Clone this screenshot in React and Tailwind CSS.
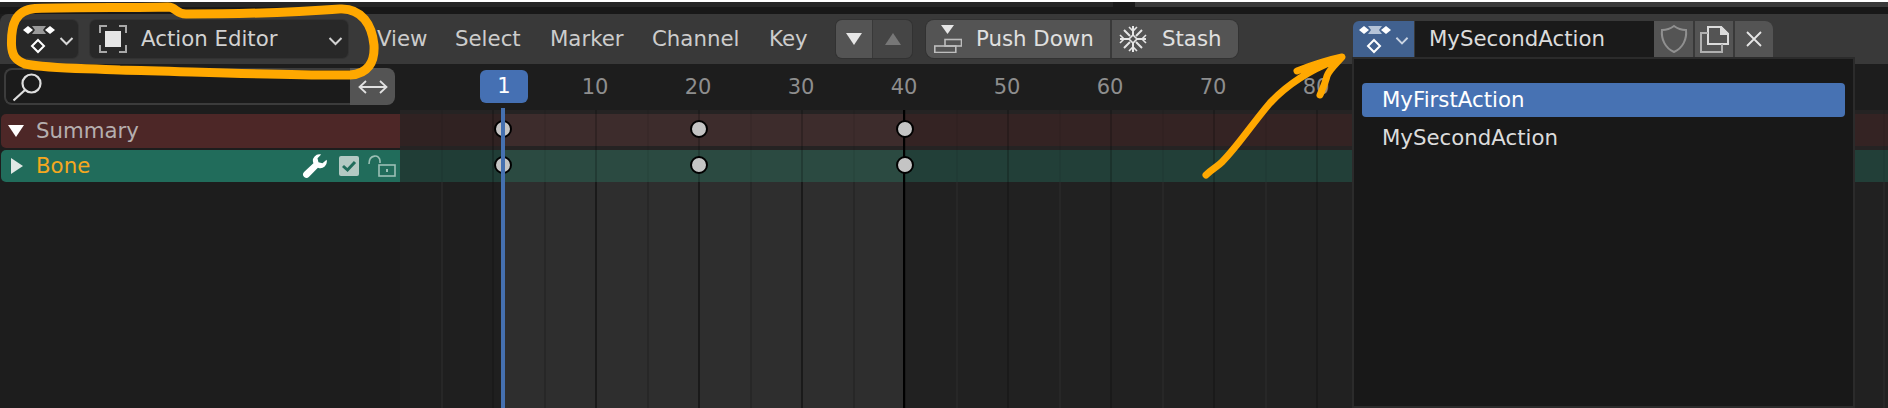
import React from 'react'

const frames = [10, 20, 30, 40, 50, 60, 70, 80]
const frameX = (f) => 493 + f * 10.3

const Chevron = ({ className = "w-[15px] h-[15px] mt-[4px]" }) => (
    <svg className={className} viewBox="0 0 15 15" fill="none" stroke="currentColor" strokeWidth="2">
        <path d="M1.5 4 L7.5 10 L13.5 4" />
    </svg>
)

const ActionIcon = ({ band = "#9a9a9a" }) => (
    <svg width="32" height="30" viewBox="0 0 32 30">
        <path d="M9 2 H23 L20 6 L23 10 H9 L12 6 Z" fill={band} />
        <path d="M5 2 L10 6 L5 10 L0 6 Z" fill="#fff" />
        <path d="M27 2 L32 6 L27 10 L22 6 Z" fill="#fff" />
        <path d="M15 16 L21 22 L15 28 L9 22 Z" fill="none" stroke="#fff" strokeWidth="2" />
    </svg>
)

const EditorIcon = () => (
    <svg width="28" height="28" viewBox="0 0 28 28" fill="none">
        <path d="M1 8 V1 H8 M20 1 H27 V8 M27 20 V27 H20 M8 27 H1 V20" stroke="#a8a8a8" strokeWidth="2" />
        <rect x="6" y="6" width="16" height="16" fill="#e6e6e6" />
    </svg>
)

const PushDownIcon = () => (
    <svg width="28" height="28" viewBox="0 0 28 28" fill="none">
        <path d="M7 0 H20 L13.5 9 Z" fill="#e6e6e6" />
        <rect x="11" y="14.5" width="16.5" height="6.5" stroke="#bdbdbd" strokeWidth="1.6" />
        <rect x="0.8" y="21" width="21" height="6.5" stroke="#bdbdbd" strokeWidth="1.6" />
    </svg>
)

const StashIcon = () => (
    <svg width="28" height="28" viewBox="0 0 28 28" fill="none" stroke="#e6e6e6" strokeWidth="2">
        <path d="M14 1 V10 M14 18 V27 M1 14 H10 M18 14 H27 M5 5 L11 11 M23 5 L17 11 M5 23 L11 17 M23 23 L17 17" />
        <path d="M10 2 L14 6 L18 2 M10 26 L14 22 L18 26 M1 10 L5 14 L1 18 M27 10 L23 14 L27 18" strokeWidth="1.6" />
        <path d="M14 10 L18 14 L14 18 L10 14 Z" strokeWidth="1.6" />
    </svg>
)

const ShieldIcon = () => (
    <svg width="28" height="30" viewBox="0 0 28 30" fill="none">
        <path d="M14 2 C18 5 22 6 26 6 C27 15 23 24 14 28 C5 24 1 15 2 6 C6 6 10 5 14 2 Z" stroke="#909090" strokeWidth="2" />
    </svg>
)

const CopyIcon = () => (
    <svg width="29" height="27" viewBox="0 0 29 27" fill="none" stroke="#dcdcdc" strokeWidth="2">
        <path d="M8 1 H21 L28 8 V18 H8 Z" />
        <path d="M21 1 L28 8 H21 Z" fill="#dcdcdc" />
        <path d="M8 7 H1 V26 H22 V18" stroke="#b0b0b0" />
    </svg>
)

const Key = ({ x, y }) => (
    <div
        className="absolute w-[18px] h-[18px] rounded-full bg-[#c4c4c4] border-2 border-black"
        style={{ left: x - 9, top: y - 9 }}
    />
)

const Timeline = () => {
    const lines = []
    for (let f = -5; f <= 135; f += 5) lines.push(f)

    return (
        <div className="relative flex-1 overflow-hidden bg-[#212121]">
            {/* preview range is brighter than the rest */}
            <div className="absolute top-[46px] bottom-0 left-[105px] w-[400px] bg-[#2e2e2e]" />
            <div className="absolute top-[46px] bottom-0 left-0 w-[100px] bg-[#1f1f1f]" />
            {lines.map((f) => (
                <div
                    key={f}
                    className={f % 10 === 0 ? "absolute top-[46px] bottom-0 w-[2px] bg-[#1a1a1a]" : "absolute top-[46px] bottom-0 w-[2px] bg-[#272727]"}
                    style={{ left: frameX(f) - 401 }}
                />
            ))}
            {/* strips */}
            <div className="absolute top-[46px] h-[72px] left-0 right-0 bg-[#252323]" />
            <div className="absolute top-[50px] h-[32px] left-0 right-0 bg-[#342323]" />
            <div className="absolute top-[50px] h-[32px] left-[105px] w-[400px] bg-[#3d2c2c]" />
            <div className="absolute top-[50px] h-[32px] left-0 w-[105px] bg-[#302222]" />
            <div className="absolute top-[86px] h-[32px] left-0 right-0 bg-[#223f38]" />
            <div className="absolute top-[86px] h-[32px] left-[105px] w-[400px] bg-[#2b4a41]" />
            <div className="absolute top-[86px] h-[32px] left-0 w-[105px] bg-[#203d36]" />
            {lines.map((f) => (
                <div
                    key={f}
                    className={f % 10 === 0 ? "absolute top-[46px] h-[72px] w-[2px] bg-black/20" : "absolute top-[46px] h-[72px] w-[2px] bg-black/5"}
                    style={{ left: frameX(f) - 401 }}
                />
            ))}
            <div className="absolute top-[46px] bottom-0 left-[503px] w-[2px] bg-black" />
            {/* ruler */}
            <div className="absolute top-0 left-0 right-0 h-[46px] bg-[#1d1d1d]" />
            {frames.map((f) => (
                <span
                    key={f}
                    className="absolute top-[9px] w-[40px] -ml-[20px] text-center text-[21px] leading-[28px] text-[#8e8e8e]"
                    style={{ left: frameX(f) - 401 }}
                >
                    {f}
                </span>
            ))}
            {[1, 20, 40].map((f) => (
                <React.Fragment key={f}>
                    <Key x={frameX(f) - 400.3} y={65} />
                    <Key x={frameX(f) - 400.3} y={101} />
                </React.Fragment>
            ))}
            {/* playhead */}
            <div className="absolute top-[44px] bottom-0 left-[101px] w-[4px] bg-[#4570b0]" />
            <div className="absolute top-[6px] left-[80px] w-[48px] h-[33px] rounded-[6px] bg-[#4570b3] text-center text-[21px] leading-[33px] text-white">1</div>
        </div>
    )
}

const App = () => {
    return (
        <div className="relative w-[1888px] h-[408px] overflow-hidden bg-[#1d1d1d] text-[21.3px] text-[#d2d2d2] font-['DejaVu_Sans',sans-serif]">
            <div className="h-[2px] bg-white" />
            <div className="flex h-[5px]">
                <div className="w-[1113px] bg-[#262626]" />
                <div className="w-[22px] bg-[#1a1a1a]" />
                <div className="flex-1 bg-[#3a3a3a]" />
            </div>
            <div className="h-[7px] bg-[#181818]" />

            {/* header */}
            <div className="flex items-center h-[50px] pl-[16px] bg-[#393939] rounded-tl-[8px]">
                <button className="flex items-center w-[62px] h-[38px] pl-[7px] rounded-[6px] bg-[#282828] ring-1 ring-[#323232] text-[#d8d8d8]">
                    <ActionIcon />
                    <span className="ml-[4px]"><Chevron /></span>
                </button>
                <button className="flex items-center w-[258px] h-[38px] ml-[12px] pl-[9px] pr-[5px] rounded-[6px] bg-[#282828] ring-1 ring-[#323232]">
                    <EditorIcon />
                    <span className="ml-[14px] flex-1 text-left">Action Editor</span>
                    <Chevron />
                </button>
                <div className="flex w-[476px] pl-[29px] text-[#cccccc]">
                    <span className="w-[78px]">View</span>
                    <span className="w-[95px]">Select</span>
                    <span className="w-[102px]">Marker</span>
                    <span className="w-[117px]">Channel</span>
                    <span>Key</span>
                </div>
                <div className="flex h-[38px] ml-[12px] w-[76px] rounded-[6px] overflow-hidden ring-1 ring-[#323232]">
                    <div className="flex w-[36px] items-center justify-center bg-[#545454]">
                        <span className="w-0 h-0 border-x-[8px] border-t-[12px] border-x-transparent border-t-[#e6e6e6]" />
                    </div>
                    <div className="flex flex-1 items-center justify-center ml-[1px] bg-[#454545]">
                        <span className="w-0 h-0 border-x-[8px] border-b-[12px] border-x-transparent border-b-[#777777]" />
                    </div>
                </div>
                <div className="flex h-[38px] ml-[14px] w-[312px] rounded-[8px] overflow-hidden ring-1 ring-[#323232] text-[#e0e0e0]">
                    <div className="flex w-[184px] items-center pl-[8px] bg-[#545454]">
                        <PushDownIcon />
                        <span className="ml-[14px]">Push Down</span>
                    </div>
                    <div className="flex flex-1 items-center pl-[7px] ml-[2px] bg-[#545454]">
                        <StashIcon />
                        <span className="ml-[15px]">Stash</span>
                    </div>
                </div>
                <div className="flex h-[36px] ml-[115px] w-[420px] rounded-t-[6px] overflow-hidden">
                    <div className="flex w-[61px] items-center pl-[6px] bg-[#41618f] text-[#c9d3e2]">
                        <ActionIcon band="#b5c4d8" />
                        <span className="ml-[4px]"><Chevron className="w-[14px] h-[14px] mt-[4px]" /></span>
                    </div>
                    <div className="w-[239px] ml-[1px] pl-[14px] leading-[36px] bg-[#1a1a1a] text-[#dcdcdc]">MySecondAction</div>
                    <div className="flex w-[39px] items-center justify-center bg-[#545454]"><ShieldIcon /></div>
                    <div className="flex w-[38px] ml-[2px] items-center justify-center bg-[#545454]"><CopyIcon /></div>
                    <div className="flex flex-1 ml-[2px] items-center justify-center bg-[#545454] rounded-tr-[8px]">
                        <svg width="18" height="18" viewBox="0 0 18 18" stroke="#e6e6e6" strokeWidth="1.8"><path d="M2 2 L16 16 M16 2 L2 16" /></svg>
                    </div>
                </div>
            </div>

            {/* body */}
            <div className="flex h-[344px]">
                <div className="w-[400px] shrink-0 bg-[#1d1d1d]">
                    <div className="flex h-[37px] mt-[4px] ml-[4px] mr-[5px]">
                        <div className="flex flex-1 items-center pl-[7px] rounded-l-[8px] border-2 border-r-0 border-[#3c3c3c] bg-[#1b1b1b]">
                            <svg width="30" height="30" viewBox="0 0 30 30" fill="none" stroke="#dedede" strokeWidth="2.2">
                                <circle cx="18.5" cy="11.5" r="9" />
                                <path d="M12 18 L0.5 28.5" />
                            </svg>
                        </div>
                        <div className="flex w-[45px] items-center justify-center rounded-r-[8px] bg-[#545454]">
                            <svg width="30" height="16" viewBox="0 0 30 16" fill="none" stroke="#e0e0e0" strokeWidth="1.8">
                                <path d="M1 8 H29 M8 2 L1.5 8 L8 14 M22 2 L28.5 8 L22 14" />
                            </svg>
                        </div>
                    </div>
                    <div className="flex items-center h-[34px] mt-[9px] ml-[1px] pl-[7px] rounded-l-[5px] bg-[#4d2727] text-[#b5aeae]">
                        <span className="w-0 h-0 border-x-[8px] border-t-[12px] border-x-transparent border-t-white" />
                        <span className="ml-[12px]">Summary</span>
                    </div>
                    <div className="flex items-center h-[32px] mt-[2px] ml-[1px] pl-[10px] rounded-l-[5px] bg-[#216c5b]">
                        <span className="w-0 h-0 border-y-[8px] border-l-[12px] border-y-transparent border-l-[#e2e8e5]" />
                        <span className="ml-[13px] flex-1 text-[#f5a81f]">Bone</span>
                        <svg width="26" height="26" viewBox="0 0 24 24" fill="white" className="mr-[11px]">
                            <path d="M22.7 6.3a6 6 0 0 1-8 7.2L6.5 22a3 3 0 0 1-4.6-4.4l8.6-8.2a6 6 0 0 1 7.2-8l-3.4 3.5.9 3.6 3.7 1z" />
                        </svg>
                        <div className="flex w-[20px] h-[20px] items-center justify-center rounded-[2px] bg-[#b4c9c3] mr-[9px]">
                            <svg width="16" height="16" viewBox="0 0 16 16" fill="none" stroke="#216c5b" strokeWidth="3"><path d="M2 8 L6.5 12 L14 4" /></svg>
                        </div>
                        <svg width="29" height="22" viewBox="0 0 29 22" fill="none" stroke="#9cc0b6" strokeWidth="1.6" className="mr-[3px]">
                            <path d="M1 9 C1 -1 12 -1 12 6 V8" />
                            <rect x="11" y="10" width="16" height="11" />
                            <path d="M19 14 V17" strokeWidth="2" />
                        </svg>
                    </div>
                </div>
                <Timeline />
            </div>

            {/* action list dropdown */}
            <div className="absolute left-[1352px] top-[57px] bottom-0 w-[503px] border-2 border-[#2b2b2b] bg-[#181818] px-[8px] pt-[24px]">
                <div className="h-[34px] pl-[20px] leading-[33px] rounded-[4px] bg-[#4772b3] text-white">MyFirstAction</div>
                <div className="h-[34px] mt-[4px] pl-[20px] leading-[34px] text-[#dcdcdc]">MySecondAction</div>
            </div>

            {/* hand drawn marks on the screenshot */}
            <svg className="absolute inset-0 pointer-events-none" width="1888" height="408" fill="none" stroke="#ffa800" strokeLinecap="round" strokeLinejoin="round">
                <path strokeWidth="9" d="M11.5 45 C11 25 15 10 35 8.5 C80 7 130 8 168 7 C176 7 176 14 186 14 C240 14 300 12 340 9 C362 8 372 25 374 45 C375 62 368 74 350 75 C300 76 200 72 120 70 C80 68 50 69 25 64 C15 60 12 55 11.5 45 Z" />
                <path strokeWidth="7" d="M1206 175 C1212 169 1217 167 1222 162 C1238 146 1252 124 1270 103 C1286 86 1310 70 1336 60 M1297 71 C1310 66 1328 60 1342 57 C1336 64 1329 70 1327 76 C1325 84 1322 90 1320 95" />
            </svg>
        </div>
    )
}

export default App
